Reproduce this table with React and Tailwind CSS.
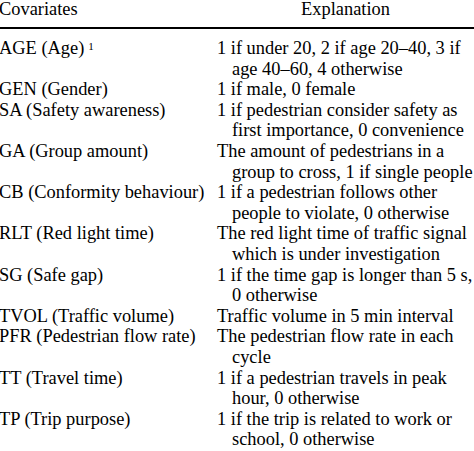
import React from "react";

const rows = [
  { name: "AGE (Age)", sup: "1", lines: ["1 if under 20, 2 if age 20–40, 3 if", "age 40–60, 4 otherwise"] },
  { name: "GEN (Gender)", lines: ["1 if male, 0 female"] },
  { name: "SA (Safety awareness)", lines: ["1 if pedestrian consider safety as", "first importance, 0 convenience"] },
  { name: "GA (Group amount)", lines: ["The amount of pedestrians in a", "group to cross, 1 if single people"] },
  { name: "CB (Conformity behaviour)", lines: ["1 if a pedestrian follows other", "people to violate, 0 otherwise"] },
  { name: "RLT (Red light time)", lines: ["The red light time of traffic signal", "which is under investigation"] },
  { name: "SG (Safe gap)", lines: ["1 if the time gap is longer than 5 s,", "0 otherwise"] },
  { name: "TVOL (Traffic volume)", lines: ["Traffic volume in 5 min interval"] },
  { name: "PFR (Pedestrian flow rate)", lines: ["The pedestrian flow rate in each", "cycle"] },
  { name: "TT (Travel time)", lines: ["1 if a pedestrian travels in peak", "hour, 0 otherwise"] },
  { name: "TP (Trip purpose)", lines: ["1 if the trip is related to work or", "school, 0 otherwise"] },
];

export default function App() {
  return (
    <div className="w-[474px] h-[451px] overflow-hidden bg-white text-black text-[18.4px] leading-[20.6px] font-['Liberation_Serif','Times_New_Roman',serif]">
      <div className="grid grid-cols-[217px_1fr] leading-[18px] pb-[9px] border-b-2 border-black whitespace-nowrap">
        <div className="-ml-[1px]">Covariates</div>
        <div className="text-center">Explanation</div>
      </div>
      <div className="pt-[9px] grid grid-cols-[217px_1fr] whitespace-nowrap">
        {rows.map((r) => (
          <React.Fragment key={r.name}>
            <div className="-ml-[1px]">
              {r.name}
              {r.sup && <sup className="ml-[4px] text-[11px] relative -top-[4px]">{r.sup}</sup>}
            </div>
            <div>
              {r.lines.map((l, i) => (
                <div key={i} className={i > 0 ? "pl-[15px]" : ""}>
                  {l}
                </div>
              ))}
            </div>
          </React.Fragment>
        ))}
      </div>
    </div>
  );
}
